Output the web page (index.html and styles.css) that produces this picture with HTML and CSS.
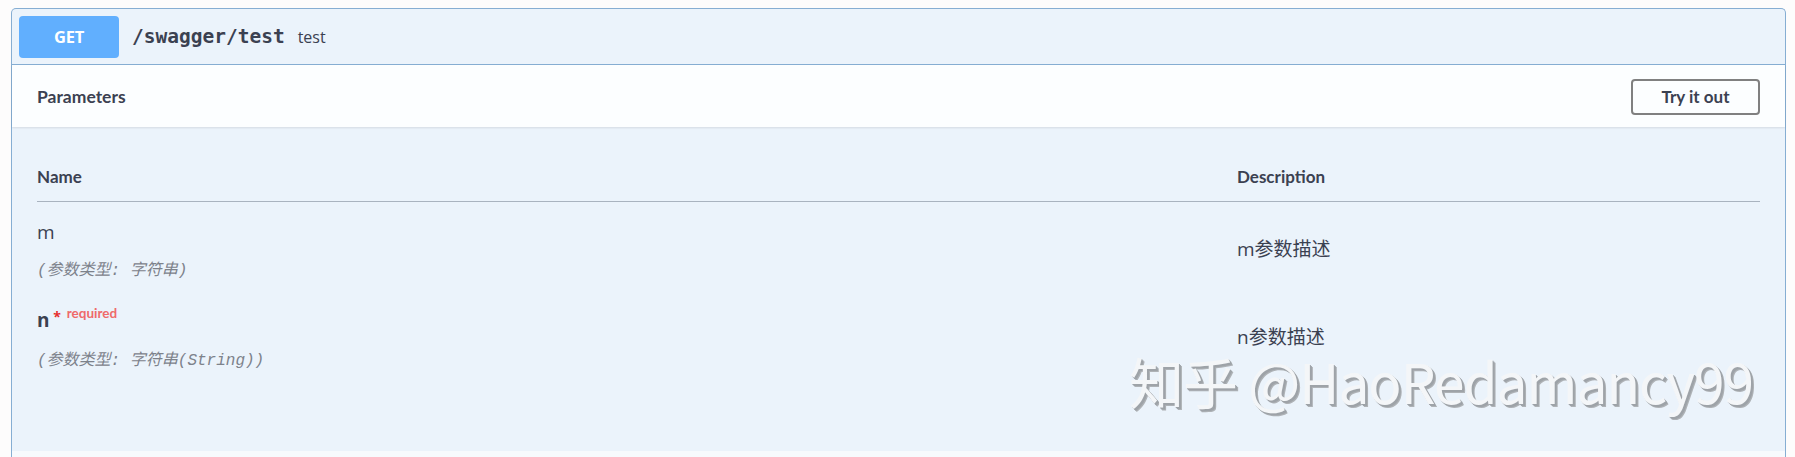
FILE: index.html
```html
<!DOCTYPE html>
<html lang="zh-CN">
<head>
<meta charset="utf-8">
<title>swagger test</title>
<link rel="stylesheet" href="styles.css">
</head>
<body>
<div class="opblock">
  <div class="summary">
    <span class="method">GET</span>
    <span class="path">/swagger/test</span>
    <span class="summary-desc">test</span>
  </div>
  <div class="section-header">
    <h4 class="section-title">Parameters</h4>
    <button class="try-out">Try it out</button>
  </div>
  <div class="table-container">
    <div class="params">
      <div class="row head">
        <div class="col-name">Name</div>
        <div class="col-desc">Description</div>
      </div>
      <div class="row param first">
        <div class="col-name">
          <div class="param-name">m</div>
          <div class="param-type">(参数类型: 字符串)</div>
        </div>
        <div class="col-desc"><p class="desc-text">m参数描述</p></div>
      </div>
      <div class="row param">
        <div class="col-name">
          <div class="param-name required">n<span class="star">&nbsp;*</span><span class="req">required</span></div>
          <div class="param-type">(参数类型: 字符串(String))</div>
        </div>
        <div class="col-desc"><p class="desc-text">n参数描述</p></div>
      </div>
    </div>
  </div>
  <div class="section-header next"></div>
  <div class="watermark">知乎 @HaoRedamancy99</div>
</div>
</body>
</html>
```
FILE: styles.css
```css
html, body {
  margin: 0;
  padding: 0;
  background: #fdfcfc;
}
body {
  padding: 8px 9px 0 11px;
  height: 457px;
  box-sizing: border-box;
  overflow: hidden;
  font-family: "Open Sans", "Noto Sans CJK SC", sans-serif;
  color: #3b4151;
}
.opblock {
  position: relative;
  border: 1px solid #86aed3;
  border-bottom: none;
  border-radius: 5px 5px 0 0;
  background: #ebf3fb;
}
.summary {
  display: flex;
  align-items: center;
  height: 55px;
  padding: 0 7px;
  border-bottom: 1px solid #86aed3;
}
.method {
  display: flex;
  align-items: center;
  justify-content: center;
  width: 100px;
  height: 42px;
  border-radius: 4px;
  background: #61affe;
  color: #fff;
  font-family: "Open Sans", sans-serif;
  font-weight: 700;
  font-size: 16.5px;
  letter-spacing: -0.3px;
}
.path {
  margin-left: 13px;
  font-family: "DejaVu Sans Mono", monospace;
  font-weight: 700;
  font-size: 19.5px;
  color: #3b4151;
}
.summary-desc {
  margin-left: 13px;
  font-family: "Open Sans", sans-serif;
  font-size: 16px;
  color: #3b4151;
}
.section-header {
  display: flex;
  align-items: center;
  justify-content: space-between;
  height: 62px;
  padding: 0 25px;
  background: rgba(255, 255, 255, 0.85);
  box-shadow: 0 1px 2px rgba(0, 0, 0, 0.1);
}
.section-title {
  margin: 0;
  font-family: "Lato", sans-serif;
  font-weight: 700;
  font-size: 17.5px;
  color: #3b4151;
}
.try-out {
  width: 129px;
  height: 36px;
  margin-top: 1px;
  border: 2px solid #808080;
  border-radius: 4px;
  background: transparent;
  font-family: "Lato", sans-serif;
  font-weight: 700;
  font-size: 17px;
  color: #3b4151;
  padding: 0;
}
.table-container {
  height: 299px;
  padding: 25px 25px 0;
}
.row {
  display: flex;
}
.col-name {
  width: 1200px;
  flex: none;
}
.col-desc {
  flex: 1;
}
.head {
  padding: 15px 0 14px;
  border-bottom: 1px solid #a9b3bf;
  font-family: "Lato", sans-serif;
  font-weight: 700;
  font-size: 17px;
  line-height: 20px;
}
.param .col-name {
  padding-top: 16px;
}
.param.first {
  height: 88px;
}
.param-name {
  font-family: "Open Sans", sans-serif;
  font-size: 19px;
  line-height: 28px;
  color: #3b4151;
}
.param-name.required {
  font-weight: 700;
}
.star {
  position: relative;
  top: -5px;
  font-size: 14px;
  color: #e62e2e;
}
.req {
  position: relative;
  top: -9px;
  padding-left: 6px;
  font-family: "Lato", sans-serif;
  font-weight: 700;
  font-size: 13.5px;
  color: #ef6a6a;
}
.param-type {
  margin-top: 15px;
  font-family: "Liberation Mono", "Noto Sans CJK SC", monospace;
  font-style: italic;
  font-size: 16px;
  line-height: 20px;
  color: #7d828b;
}
.desc-text {
  margin: 33px 0 0;
  font-family: "Open Sans", "Noto Sans CJK SC", sans-serif;
  font-size: 19px;
  line-height: 28px;
  color: #3b4151;
}
.section-header.next {
  height: 20px;
  background: #f7fafd;
  box-shadow: none;
}
.watermark {
  position: absolute;
  left: 1117px;
  top: 343px;
  font-family: "Noto Sans CJK SC", sans-serif;
  font-weight: 400;
  font-size: 55px;
  line-height: 56px;
  letter-spacing: -1px;
  color: #f4f6f8;
  text-shadow: 1px 1px 0 #9ea3a8, 2px 2px 0 #9ea3a8, 3px 3px 0 #aeb2b6;
  white-space: nowrap;
}
```
